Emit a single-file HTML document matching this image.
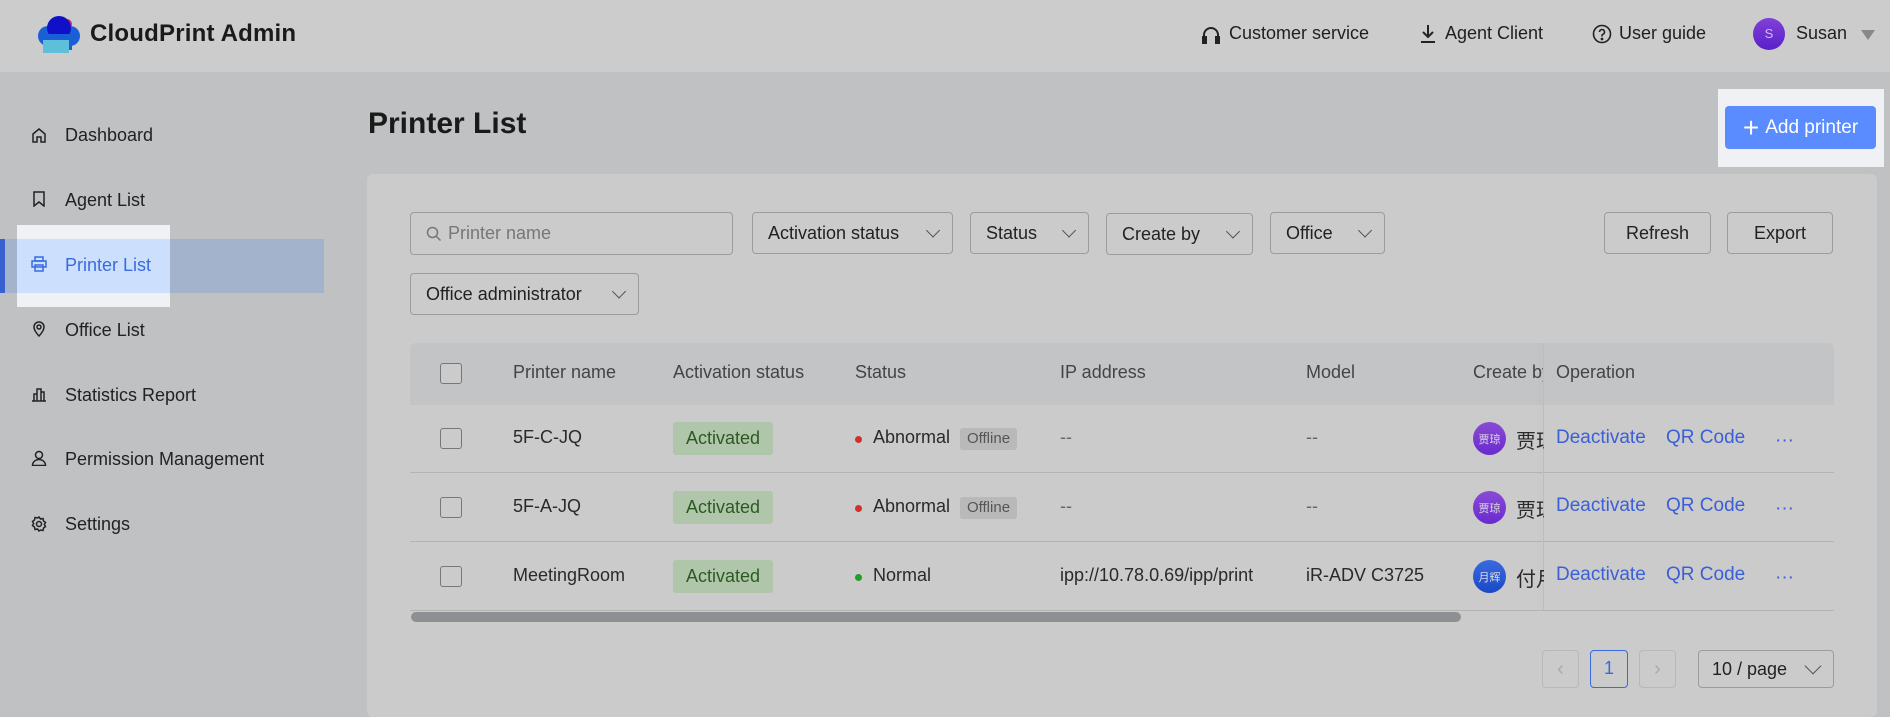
<!DOCTYPE html>
<html><head><meta charset="utf-8"><style>
*{box-sizing:border-box;margin:0;padding:0}
body{width:1890px;height:717px;overflow:hidden;background:#c0c1c3;font-family:"Liberation Sans","Noto Sans CJK SC",sans-serif;color:#222;position:relative}
.abs{position:absolute}
.hdr{left:0;top:0;width:1890px;height:72px;background:#cccccc}
.hi{font-size:18px;color:#1f1f1f;top:23px}
.menu{left:65px;font-size:18px;color:#222;line-height:22px}
.mi{left:31px;width:16px;height:16px}
.btn{border:1px solid #9c9c9c;border-radius:4px;background:#cbcbcb;font-size:18px;color:#222;display:flex;align-items:center;padding-left:15px}
.chev{position:absolute;right:14px;top:50%;width:10px;height:10px;border-right:1.5px solid #555;border-bottom:1.5px solid #555;transform:translateY(-75%) rotate(45deg)}
.th{top:362px;font-size:18px;color:#444}
.cb{left:440px;width:22px;height:21px;border:1.5px solid #777;border-radius:3px;background:#cbcbcb}
.td{font-size:18px;color:#2a2a2a}
.tag{left:673px;width:100px;height:33px;background:#b0c6ab;border-radius:3px;color:#2b5a22;font-size:18px;display:flex;align-items:center;justify-content:center}
.dot{width:7px;height:7px;border-radius:50%}
.off{left:960px;width:57px;height:22px;background:#b9b9b9;border-radius:3px;font-size:15px;color:#555;text-align:center;line-height:22px}
.av{left:1473px;width:33px;height:33px;border-radius:50%;color:#ddd;font-size:11px;display:flex;align-items:center;justify-content:center;background:linear-gradient(#8a4ad6,#6a2bd0)}
.lk{font-size:19px;color:#3a5fd8}
</style></head><body>
<div class="abs hdr"></div>
<svg class="abs" style="left:34px;top:14px" width="50" height="40" viewBox="0 0 50 40">
<circle cx="33" cy="10" r="5" fill="#c0307a"/>
<circle cx="14" cy="22" r="10" fill="#1b5fd6"/>
<circle cx="36" cy="22" r="10" fill="#1b5fd6"/>
<circle cx="25" cy="14" r="12" fill="#1010c8"/>
<rect x="10" y="20" width="28" height="16" fill="#1b5fd6"/>
<rect x="9" y="26" width="26" height="13" fill="#5ec0d8"/>
</svg>
<div class="abs" style="left:90px;top:20px;font-size:24px;font-weight:bold;color:#1a1a1a;letter-spacing:0.2px">CloudPrint Admin</div>
<svg class="abs" style="left:1201px;top:25px" width="20" height="20" viewBox="0 0 20 20" fill="none" stroke="#222" stroke-width="2"><path d="M3 15V10a7 7 0 0 1 14 0v5"/><rect x="2" y="12" width="3" height="6" fill="#222"/><rect x="15" y="12" width="3" height="6" fill="#222"/></svg>
<div class="abs hi" style="left:1229px">Customer service</div>
<svg class="abs" style="left:1419px;top:24px" width="18" height="20" viewBox="0 0 18 20" fill="none" stroke="#222" stroke-width="2"><path d="M9 1v12M4 8l5 5 5-5M2 18h14"/></svg>
<div class="abs hi" style="left:1445px">Agent Client</div>
<svg class="abs" style="left:1592px;top:24px" width="20" height="20" viewBox="0 0 20 20" fill="none" stroke="#222" stroke-width="1.6"><circle cx="10" cy="10" r="8.5"/><path d="M7.5 8a2.5 2.5 0 1 1 3.5 2.3c-.7.3-1 .8-1 1.5v.7"/><circle cx="10" cy="15" r=".6" fill="#222"/></svg>
<div class="abs hi" style="left:1619px">User guide</div>
<div class="abs" style="left:1753px;top:18px;width:32px;height:32px;border-radius:50%;background:linear-gradient(#8040d8,#5a20c8);color:#cfc0f0;font-size:13px;text-align:center;line-height:32px">S</div>
<div class="abs hi" style="left:1796px">Susan</div>
<div class="abs" style="left:1861px;top:30px;width:0;height:0;border-left:7px solid transparent;border-right:7px solid transparent;border-top:10px solid #888"></div>

<div class="abs" style="left:0;top:239px;width:324px;height:54px;background:#a3b3cb"></div>
<div class="abs" style="left:0;top:239px;width:5px;height:54px;background:#3a5fd0"></div>
<div class="abs" style="left:17px;top:225px;width:153px;height:82px;background:#f0f1f5"></div>
<div class="abs" style="left:17px;top:239px;width:153px;height:54px;background:#cce0fe"></div>
<svg class="abs mi" style="top:127px" viewBox="0 0 16 16" fill="none" stroke="#222" stroke-width="1.5"><path d="M2 7l6-5 6 5v8H10v-5H6v5H2z"/></svg>
<div class="abs menu" style="top:124px">Dashboard</div>
<svg class="abs mi" style="top:191px" viewBox="0 0 16 16" fill="none" stroke="#222" stroke-width="1.5"><path d="M3 1h10v14l-5-4-5 4z"/></svg>
<div class="abs menu" style="top:189px">Agent List</div>
<svg class="abs mi" style="top:256px" viewBox="0 0 16 16" fill="none" stroke="#3a6ae0" stroke-width="1.5"><rect x="4" y="1" width="8" height="4"/><rect x="1" y="5" width="14" height="6"/><rect x="4" y="9" width="8" height="6"/></svg>
<div class="abs menu" style="top:254px;color:#3a6ae0">Printer List</div>
<svg class="abs mi" style="top:321px" viewBox="0 0 16 16" fill="none" stroke="#222" stroke-width="1.5"><path d="M8 15s5-5 5-9A5 5 0 0 0 3 6c0 4 5 9 5 9z"/><circle cx="8" cy="6" r="2"/></svg>
<div class="abs menu" style="top:319px">Office List</div>
<svg class="abs mi" style="top:386px" viewBox="0 0 16 16" fill="none" stroke="#222" stroke-width="1.5"><path d="M1 15h14M3 15V8h3v7M6 15V3h4v12M10 15V6h3v9"/></svg>
<div class="abs menu" style="top:384px">Statistics Report</div>
<svg class="abs mi" style="top:450px" viewBox="0 0 16 16" fill="none" stroke="#222" stroke-width="1.5"><circle cx="8" cy="5" r="3.5"/><path d="M1.5 15.5a6.5 6 0 0 1 13 0z"/></svg>
<div class="abs menu" style="top:448px">Permission Management</div>
<svg class="abs mi" style="top:516px" viewBox="0 0 16 16" fill="none" stroke="#222" stroke-width="1.5"><circle cx="8" cy="8" r="2.5"/><path d="M8 1l1.5 2 2.5-.5.5 2.5 2 1.5-1.2 2 1.2 2-2 1.5-.5 2.5-2.5-.5L8 15l-1.5-2-2.5.5-.5-2.5-2-1.5 1.2-2-1.2-2 2-1.5.5-2.5 2.5.5z"/></svg>
<div class="abs menu" style="top:513px">Settings</div>

<div class="abs" style="left:368px;top:107px;font-size:30px;font-weight:bold;color:#1a1a1a">Printer List</div>
<div class="abs" style="left:1718px;top:89px;width:166px;height:78px;background:#f0f1f5"></div>
<div class="abs" style="left:1725px;top:106px;width:151px;height:43px;background:#5a8cff;border-radius:4px;color:#fff;font-size:19px;display:flex;align-items:center;justify-content:center"><span style="font-size:28px;font-weight:200;margin-right:6px;line-height:1">+</span>Add printer</div>

<div class="abs" style="left:367px;top:174px;width:1510px;height:543px;background:#cbcbcb;border-radius:6px"></div>
<div class="abs btn" style="left:410px;top:212px;width:323px;height:43px;color:#777"><svg width="16" height="16" viewBox="0 0 16 16" fill="none" stroke="#777" stroke-width="1.5" style="margin-right:6px"><circle cx="6.5" cy="6.5" r="5"/><path d="M10 10l4.5 4.5"/></svg>Printer name</div>
<div class="abs btn" style="left:752px;top:212px;width:201px;height:42px">Activation status<span class="chev"></span></div>
<div class="abs btn" style="left:970px;top:212px;width:119px;height:42px">Status<span class="chev"></span></div>
<div class="abs btn" style="left:1106px;top:213px;width:147px;height:42px">Create by<span class="chev"></span></div>
<div class="abs btn" style="left:1270px;top:212px;width:115px;height:42px">Office<span class="chev"></span></div>
<div class="abs btn" style="left:1604px;top:212px;width:107px;height:42px;justify-content:center;padding:0">Refresh</div>
<div class="abs btn" style="left:1727px;top:212px;width:106px;height:42px;justify-content:center;padding:0">Export</div>
<div class="abs btn" style="left:410px;top:273px;width:229px;height:42px">Office administrator<span class="chev"></span></div>

<div class="abs" style="left:410px;top:343px;width:1424px;height:62px;background:#c3c4c6;border-radius:6px 6px 0 0"></div>
<div class="abs" style="left:410px;top:472px;width:1424px;height:1px;background:#b4b4b4"></div>
<div class="abs" style="left:410px;top:541px;width:1424px;height:1px;background:#b4b4b4"></div>
<div class="abs" style="left:410px;top:610px;width:1424px;height:1px;background:#b4b4b4"></div>
<div class="abs" style="left:411px;top:612px;width:1050px;height:10px;background:#8e8f92;border-radius:5px"></div>
<div class="abs" style="left:1543px;top:343px;width:1px;height:267px;background:#bdbdbd;box-shadow:-3px 0 6px rgba(0,0,0,.06)"></div>

<div class="abs cb" style="top:363px"></div>
<div class="abs th" style="left:513px">Printer name</div>
<div class="abs th" style="left:673px">Activation status</div>
<div class="abs th" style="left:855px">Status</div>
<div class="abs th" style="left:1060px">IP address</div>
<div class="abs th" style="left:1306px">Model</div>
<div class="abs th" style="left:1473px;width:70px;overflow:hidden;white-space:nowrap">Create by</div>
<div class="abs th" style="left:1556px">Operation</div>

<div class="abs cb" style="top:428px"></div>
<div class="abs td" style="left:513px;top:427px">5F-C-JQ</div>
<div class="abs tag" style="top:422px">Activated</div>
<div class="abs dot" style="left:855px;top:436px;background:#d03030"></div>
<div class="abs td" style="left:873px;top:427px">Abnormal</div>
<div class="abs off" style="top:428px">Offline</div>
<div class="abs td" style="left:1060px;top:427px;color:#666">--</div>
<div class="abs td" style="left:1306px;top:427px;color:#666">--</div>
<div class="abs av" style="top:422px">贾琼</div>
<div class="abs td" style="left:1516px;top:425px;width:28px;overflow:hidden;white-space:nowrap;font-size:20px">贾琼</div>
<div class="abs lk" style="left:1556px;top:427px">Deactivate</div>
<div class="abs lk" style="left:1666px;top:427px">QR Code</div>
<div class="abs lk" style="left:1775px;top:430px">···</div>

<div class="abs cb" style="top:497px"></div>
<div class="abs td" style="left:513px;top:496px">5F-A-JQ</div>
<div class="abs tag" style="top:491px">Activated</div>
<div class="abs dot" style="left:855px;top:505px;background:#d03030"></div>
<div class="abs td" style="left:873px;top:496px">Abnormal</div>
<div class="abs off" style="top:497px">Offline</div>
<div class="abs td" style="left:1060px;top:496px;color:#666">--</div>
<div class="abs td" style="left:1306px;top:496px;color:#666">--</div>
<div class="abs av" style="top:491px">贾琼</div>
<div class="abs td" style="left:1516px;top:494px;width:28px;overflow:hidden;white-space:nowrap;font-size:20px">贾琼</div>
<div class="abs lk" style="left:1556px;top:495px">Deactivate</div>
<div class="abs lk" style="left:1666px;top:495px">QR Code</div>
<div class="abs lk" style="left:1775px;top:498px">···</div>

<div class="abs cb" style="top:566px"></div>
<div class="abs td" style="left:513px;top:565px">MeetingRoom</div>
<div class="abs tag" style="top:560px">Activated</div>
<div class="abs dot" style="left:855px;top:574px;background:#20a020"></div>
<div class="abs td" style="left:873px;top:565px">Normal</div>
<div class="abs td" style="left:1060px;top:565px">ipp://10.78.0.69/ipp/print</div>
<div class="abs td" style="left:1306px;top:565px">iR-ADV C3725</div>
<div class="abs av" style="top:560px;background:linear-gradient(#3a6ae0,#1a48c8)">月辉</div>
<div class="abs td" style="left:1516px;top:563px;width:28px;overflow:hidden;white-space:nowrap;font-size:20px">付月辉</div>
<div class="abs lk" style="left:1556px;top:564px">Deactivate</div>
<div class="abs lk" style="left:1666px;top:564px">QR Code</div>
<div class="abs lk" style="left:1775px;top:567px">···</div>

<div class="abs" style="left:1542px;top:650px;width:37px;height:38px;border:1px solid #b8b8b8;border-radius:4px;color:#aaa;font-size:20px;text-align:center;line-height:36px">&lsaquo;</div>
<div class="abs" style="left:1590px;top:650px;width:38px;height:38px;border:1.5px solid #3a6ae0;border-radius:4px;color:#3a6ae0;font-size:18px;text-align:center;line-height:35px">1</div>
<div class="abs" style="left:1639px;top:650px;width:37px;height:38px;border:1px solid #b8b8b8;border-radius:4px;color:#aaa;font-size:20px;text-align:center;line-height:36px">&rsaquo;</div>
<div class="abs btn" style="left:1698px;top:650px;width:136px;height:38px;font-size:18px;padding-left:13px">10 / page<span class="chev" style="width:12px;height:12px"></span></div>
</body></html>
